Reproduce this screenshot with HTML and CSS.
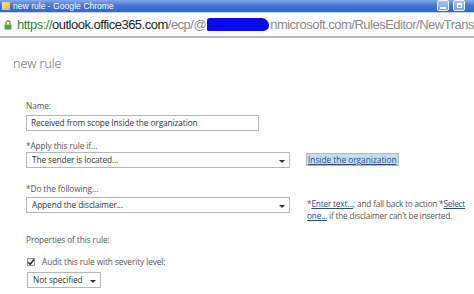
FILE: index.html
```html
<!DOCTYPE html>
<html>
<head>
<meta charset="utf-8">
<link rel="stylesheet" href="styles.css">
</head>
<body>
<div class="titlebar">
  <span class="favicon"></span>
  <span class="title">new rule - Google Chrome</span>
  <span class="winbtns">
    <span class="winbtn"><span class="min"></span></span>
    <span class="winbtn"><span class="max"></span></span>
  </span>
</div>
<div class="addressbar">
  <svg class="lock" width="8" height="10" viewBox="0 0 8 10"><path d="M2 4.5V3a2 2 0 0 1 4 0v1.5" fill="none" stroke="#5a9a3a" stroke-width="1.3"/><rect x="0.5" y="4.5" width="7" height="5" rx="0.8" fill="#5aa23a"/></svg>
  <span class="url"><span class="scheme">https://</span><span class="host">outlook.office365.com</span><span class="path">/ecp/@</span><span class="scribble"></span><span class="path">nmicrosoft.com/RulesEditor/NewTransportRule.aspx</span></span>
</div>
<div class="page">
  <h1 class="heading">new rule</h1>
  <div class="form">
    <div class="field name-field">
      <div class="label">Name:</div>
      <div class="input name-input">Received from scope Inside the organization</div>
    </div>
    <div class="field apply-field">
      <div class="label">*Apply this rule if...</div>
      <div class="row">
        <div class="select wide"><span>The sender is located...</span><span class="arrow"></span></div>
        <div class="side"><span class="link selected">Inside the organization</span></div>
      </div>
    </div>
    <div class="field do-field">
      <div class="label">*Do the following...</div>
      <div class="row">
        <div class="select wide"><span>Append the disclaimer...</span><span class="arrow"></span></div>
        <div class="side desc">*<span class="link">Enter text...</span>; and fall back to action *<span class="link">Select one...</span> if the disclaimer can't be inserted.</div>
      </div>
    </div>
    <div class="field props">
      <div class="label">Properties of this rule:</div>
      <div class="check-row"><span class="checkbox"><svg width="8" height="8" viewBox="0 0 8 8"><path d="M1.2 4.2 3.2 6.3 6.9 1.4" fill="none" stroke="#333" stroke-width="1.6"/></svg></span><span class="check-label">Audit this rule with severity level:</span></div>
      <div class="select small"><span>Not specified</span><span class="arrow"></span></div>
    </div>
  </div>
</div>
</body>
</html>
```
FILE: styles.css
```css
html, body { margin: 0; padding: 0; background: #fff; }
body { width: 474px; height: 294px; overflow: hidden; font-family: "Open Sans", "Noto Sans", sans-serif; }

.titlebar {
  height: 12px;
  background: linear-gradient(#86a9e8 0%, #4275d8 45%, #3366cf 100%);
  display: flex;
  align-items: center;
}
.favicon {
  width: 8px; height: 8px; margin-left: 2px;
  background: linear-gradient(135deg, #f6e39a, #e2b442);
  border-radius: 1px;
}
.title {
  margin-left: 3px;
  font-family: "Liberation Sans", Arial, sans-serif;
  font-size: 8.6px;
  color: #fff;
  line-height: 12px;
  white-space: nowrap;
}
.winbtns { margin-left: auto; display: flex; gap: 4px; margin-right: 9px; align-self: flex-start; }
.winbtn {
  width: 12px; height: 11px;
  background: linear-gradient(#a8c4f2, #7aa0e6);
  border: 1px solid #eef3fc;
  border-radius: 2px;
  box-sizing: border-box;
  display: flex; align-items: center; justify-content: center;
}
.winbtn .min { width: 6px; height: 2px; background: #fff; margin-top: 4px; }
.winbtn .max { width: 5px; height: 5px; border: 1px solid #fff; border-top-width: 2px; box-sizing: border-box; }

.addressbar {
  height: 23px;
  display: flex;
  align-items: center;
  border-top: 1px solid #c9d4e4;
  border-bottom: 2px solid #b9b9b9;
  background: #fff;
  overflow: hidden;
  white-space: nowrap;
}
.lock { margin-left: 4px; margin-right: 5px; flex: none; }
.url {
  font-family: "Liberation Sans", Arial, sans-serif;
  font-size: 13px;
  letter-spacing: -0.5px;
  color: #8a8a8a;
  display: flex;
  align-items: center;
}
.scheme { color: #2d8a2d; }
.host { color: #222; }
.scribble {
  display: inline-block;
  width: 62px; height: 13px;
  background: #0a0af0;
  border-radius: 3px 8px 6px 2px;
  margin: 0 1px;
  flex: none;
}

.page { padding: 18px 0 0 13px; color: #444; }
.heading {
  margin: 0;
  font-family: "Open Sans", sans-serif;
  font-weight: 300;
  font-size: 12.5px;
  color: #5a5a5a;
  line-height: 16px;
}
.form { margin-left: 13px; margin-top: 28px; font-size: 8.3px; }
.label { color: #555; line-height: 11px; letter-spacing: -0.1px; }
.input, .select {
  border: 1px solid #b8b8b8;
  height: 16px;
  box-sizing: border-box;
  line-height: 14px;
  padding-left: 4px;
  color: #333;
  letter-spacing: -0.1px;
  white-space: nowrap;
}
.name-input { width: 233px; margin-top: 4px; }
.apply-field { margin-top: 9px; }
.do-field { margin-top: 15px; }
.row { display: flex; align-items: flex-start; margin-top: 1px; }
.do-field .row { margin-top: 3px; }
.select { display: flex; align-items: center; justify-content: space-between; padding-left: 5px; padding-right: 4px; }
.select.wide { width: 264px; flex: none; }
.arrow { width: 0; height: 0; border-left: 3px solid transparent; border-right: 3px solid transparent; border-top: 3px solid #333; margin-top: 2px; }
.side { margin-left: 17px; line-height: 16px; flex: none; }
.link { color: #2a4f86; text-decoration: underline; }
.selected { background: #c9d9ee; outline: 1px solid #a7bcd9; padding: 0 1px; }
.desc { width: 166px; line-height: 12px; color: #555; margin-top: 1px; letter-spacing: -0.2px; }
.props { margin-top: 12px; }
.check-row { display: flex; align-items: center; margin-top: 11px; margin-left: 1px; height: 11px; }
.checkbox { width: 8px; height: 8px; border: 1px solid #999; background: #f3f3f3; display: flex; align-items: center; justify-content: center; box-sizing: border-box; margin-right: 7px; }
.checkbox svg { flex: none; }
.check-label { color: #555; letter-spacing: -0.1px; }
.select.small { width: 74px; margin-top: 5px; margin-left: 1px; }
```
